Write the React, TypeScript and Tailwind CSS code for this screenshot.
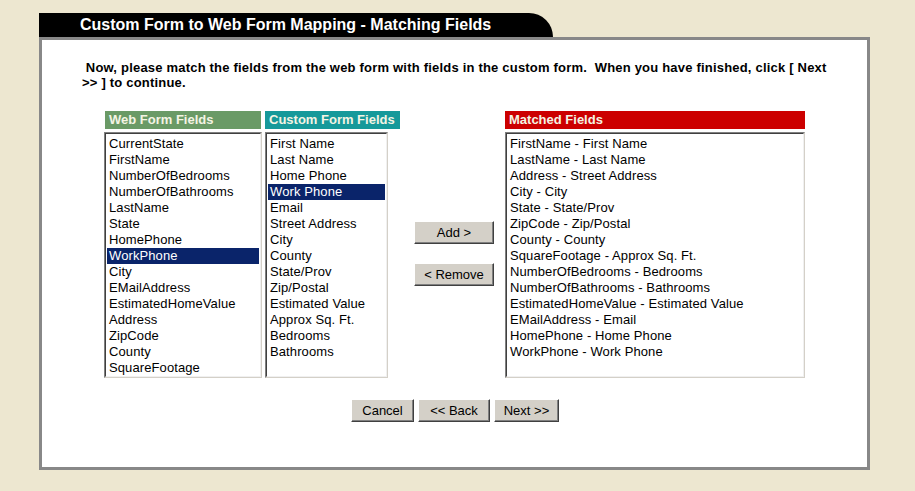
import React from "react";

const webFields = [
  "CurrentState",
  "FirstName",
  "NumberOfBedrooms",
  "NumberOfBathrooms",
  "LastName",
  "State",
  "HomePhone",
  "WorkPhone",
  "City",
  "EMailAddress",
  "EstimatedHomeValue",
  "Address",
  "ZipCode",
  "County",
  "SquareFootage",
];

const customFields = [
  "First Name",
  "Last Name",
  "Home Phone",
  "Work Phone",
  "Email",
  "Street Address",
  "City",
  "County",
  "State/Prov",
  "Zip/Postal",
  "Estimated Value",
  "Approx Sq. Ft.",
  "Bedrooms",
  "Bathrooms",
];

const matched = [
  "FirstName - First Name",
  "LastName - Last Name",
  "Address - Street Address",
  "City - City",
  "State - State/Prov",
  "ZipCode - Zip/Postal",
  "County - County",
  "SquareFootage - Approx Sq. Ft.",
  "NumberOfBedrooms - Bedrooms",
  "NumberOfBathrooms - Bathrooms",
  "EstimatedHomeValue - Estimated Value",
  "EMailAddress - Email",
  "HomePhone - Home Phone",
  "WorkPhone - Work Phone",
];

function ListBox({ items, selected, width }: { items: string[]; selected?: string; width: string }) {
  return (
    <div className={`${width} h-[246px] border border-t-[#808080] border-l-[#808080] border-r-[#d4d0c8] border-b-[#d4d0c8]`}>
      <div className="h-full border border-t-[#404040] border-l-[#404040] border-r-[#f0f0f0] border-b-[#f0f0f0] bg-white px-px pt-[2px] overflow-hidden">
        {items.map((item) => (
          <div
            key={item}
            className={`h-4 leading-4 px-[2px] whitespace-nowrap text-[13px] tracking-[0.1px] ${
              item === selected ? "bg-[#0a246a] text-white" : "text-black"
            }`}
          >
            {item}
          </div>
        ))}
      </div>
    </div>
  );
}

function WinButton({ label, width }: { label: string; width: string }) {
  return (
    <button
      className={`${width} h-[23px] bg-[#d4d0c8] text-black text-[13px] leading-none border border-t-white border-l-white border-r-[#404040] border-b-[#404040] shadow-[inset_-1px_-1px_0_#808080]`}
    >
      {label}
    </button>
  );
}

export default function App() {
  return (
    <div
      className="w-[915px] h-[491px] bg-[#ede7d0] pt-[13px] pl-[39px]"
      style={{ fontFamily: '"Liberation Sans", Arial, sans-serif' }}
    >
      <div className="w-[514px] h-[24px] bg-black rounded-tr-[24px] pl-[41px] flex items-center">
        <span className="text-white font-bold text-[16px] leading-none">
          Custom Form to Web Form Mapping - Matching Fields
        </span>
      </div>
      <div className="w-[831px] h-[433px] bg-white border-[3px] border-[#888888] flex flex-col">
        <p className="ml-[40px] mt-[20px] w-[752px] text-[13px] font-bold leading-[15px] tracking-[0.2px] text-black">
          &nbsp;Now, please match the fields from the web form with fields in the custom form.&nbsp; When you have
          finished, click [ Next &gt;&gt; ] to continue.
        </p>
        <div className="flex mt-[21px] ml-[62px]">
          <div className="flex flex-col w-[158px]">
            <div className="ml-px w-[156px] h-[18px] bg-[#6a9a66] text-[#f4f4e4] font-bold text-[13px] leading-[18px] pl-[4px]">
              Web Form Fields
            </div>
            <div className="mt-[3px]">
              <ListBox items={webFields} selected="WorkPhone" width="w-[158px]" />
            </div>
          </div>
          <div className="flex flex-col ml-[3px] w-[135px]">
            <div className="w-[135px] h-[18px] bg-[#16999a] text-[#f4f4e4] font-bold text-[13px] leading-[18px] pl-[4px]">
              Custom Form Fields
            </div>
            <div className="mt-[3px]">
              <ListBox items={customFields} selected="Work Phone" width="w-[123px]" />
            </div>
          </div>
          <div className="w-[105px] flex flex-col items-center justify-center gap-[19px] pt-[17px] pl-[3px]">
            <WinButton label="Add >" width="w-[80px]" />
            <WinButton label="< Remove" width="w-[80px]" />
          </div>
          <div className="flex flex-col w-[300px]">
            <div className="w-[300px] h-[18px] bg-[#cc0000] text-[#f4f4e4] font-bold text-[13px] leading-[18px] pl-[4px]">
              Matched Fields
            </div>
            <div className="mt-[3px]">
              <ListBox items={matched} width="w-[300px]" />
            </div>
          </div>
        </div>
        <div className="flex justify-center gap-[4px] mt-[21px] pl-[1px]">
          <WinButton label="Cancel" width="w-[63px]" />
          <WinButton label="<< Back" width="w-[72px]" />
          <WinButton label="Next >>" width="w-[65px]" />
        </div>
      </div>
    </div>
  );
}
